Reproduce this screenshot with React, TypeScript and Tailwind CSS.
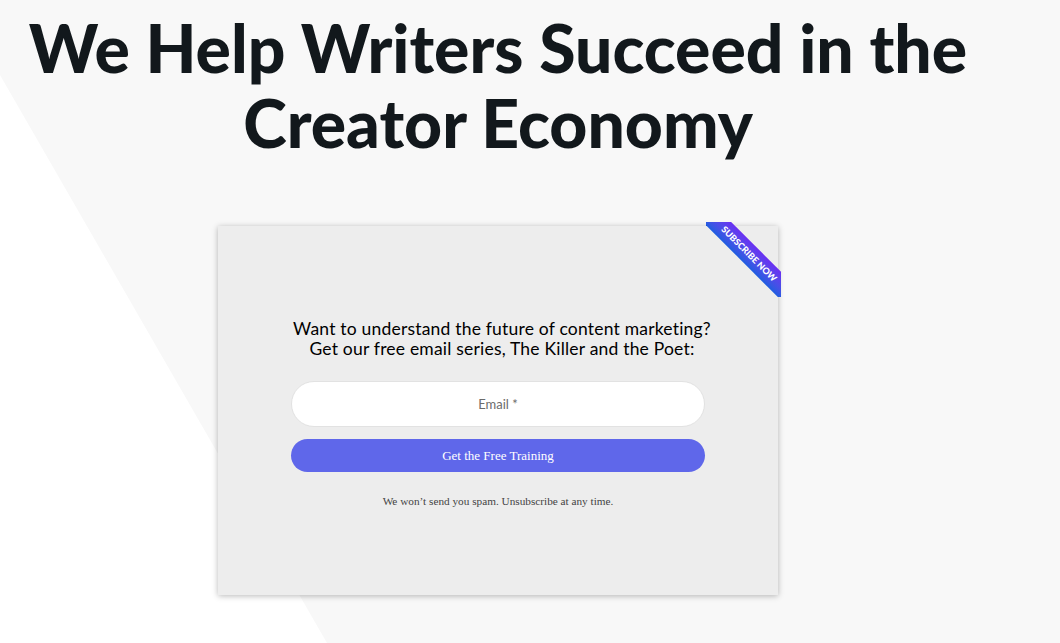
import React from "react";

function Ribbon() {
  return (
    <>
      {/* fold shadows behind the band */}
      <div className="absolute top-[-4px] right-[66px] w-[6px] h-[4px] bg-[#1640b0]" />
      <div className="absolute top-[64px] right-[-3px] w-[3px] h-[7px] bg-[#1640b0]" />
      <div className="absolute top-[-4px] right-[-3px] w-[75px] h-[75px] overflow-hidden">
        <div className="absolute left-[-17px] top-[22px] w-[120px] h-[20px] rotate-45 bg-linear-to-b from-[#6a2ff2] to-[#1c5de0] flex items-center justify-center">
          <span className="text-white text-[9px] font-black uppercase [font-family:Lato,'Liberation_Sans',sans-serif]">
            Subscribe now
          </span>
        </div>
      </div>
    </>
  );
}

export default function App() {
  return (
    <div className="relative min-h-[643px] w-full overflow-hidden bg-white">
      {/* light diagonal backdrop */}
      <div className="absolute inset-0 bg-[#f8f8f8] [clip-path:polygon(0_0,100%_0,100%_100%,327px_100%,0_75px)]" />

      <div className="relative w-[996px] flex flex-col items-center pt-[10px]">
        <h1 className="text-[#12181c] text-[66px] leading-[75px] font-black text-center [font-family:Lato,'Liberation_Sans',sans-serif]">
          We Help Writers Succeed in the
          <br />
          Creator Economy
        </h1>

        <div className="relative mt-[66px] w-[560px] h-[369px] bg-[#ededed] shadow-[0_1px_6px_rgba(0,0,0,0.28)] flex flex-col items-center pt-[93px]">
          <Ribbon />

          <p className="pl-[8px] text-black text-[17.5px] leading-[20px] tracking-[0.2px] text-center [font-family:Lato,'Liberation_Sans',sans-serif]">
            Want to understand the future of content marketing?
            <br />
            Get our free email series, The Killer and the Poet:
          </p>

          <div className="mt-[22px] w-[414px] flex flex-col">
            <input
              type="email"
              placeholder="Email *"
              className="h-[46px] w-full rounded-full bg-white border border-[#e2e2e2] text-center text-[13px] text-[#555] placeholder:text-[#6b6b6b] outline-none [font-family:Lato,'Liberation_Sans',sans-serif]"
            />
            <button className="mt-[12px] h-[33px] w-full rounded-full bg-[#5f67ea] text-white text-[13px] [font-family:'Liberation_Serif',serif]">
              Get the Free Training
            </button>
          </div>

          <p className="mt-[21px] text-[#444] text-[11.25px] [font-family:'Liberation_Serif',serif]">
            We won’t send you spam. Unsubscribe at any time.
          </p>
        </div>
      </div>
    </div>
  );
}
